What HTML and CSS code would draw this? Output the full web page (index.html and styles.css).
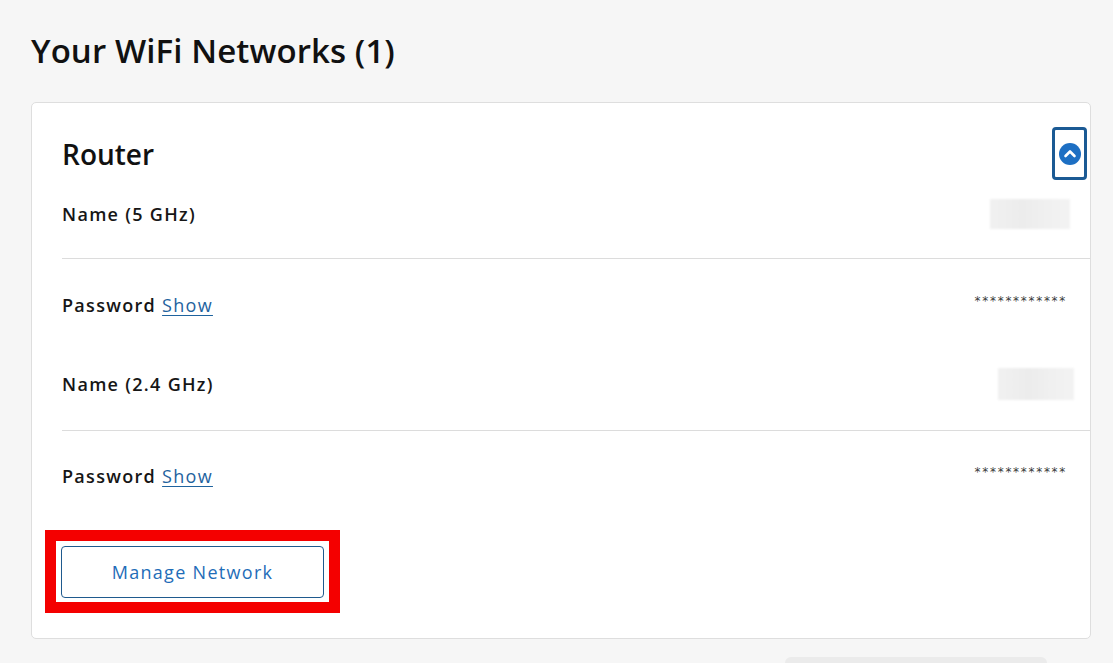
FILE: index.html
```html
<!DOCTYPE html>
<html lang="en">
<head>
<meta charset="utf-8">
<title>Your WiFi Networks</title>
<link rel="stylesheet" href="styles.css">
</head>
<body>
<div class="page">
  <h1 class="title">Your WiFi Networks (1)</h1>
  <section class="card">
    <div class="card-head">
      <h2 class="card-title">Router</h2>
      <button class="toggle" aria-label="Collapse">
        <svg width="22" height="22" viewBox="0 0 22 22">
          <circle cx="11" cy="11" r="11" fill="#1d6fc3"/>
          <path d="M6.5 13 L11 8.5 L15.5 13" fill="none" stroke="#fff" stroke-width="2.6" stroke-linecap="round" stroke-linejoin="round"/>
        </svg>
      </button>
    </div>
    <div class="row row-name1 divided">
      <span class="label">Name (5 GHz)</span>
      <span class="blur blur1"></span>
    </div>
    <div class="row row-pass1">
      <span class="label">Password <a class="link" href="#">Show</a></span>
      <span class="stars">************</span>
    </div>
    <div class="row row-name2 divided">
      <span class="label">Name (2.4 GHz)</span>
      <span class="blur blur2"></span>
    </div>
    <div class="row row-pass2">
      <span class="label">Password <a class="link" href="#">Show</a></span>
      <span class="stars">************</span>
    </div>
    <div class="actions">
      <div class="highlight">
        <button class="btn">Manage Network</button>
      </div>
    </div>
  </section>
  <div class="next-card"></div>
</div>
</body>
</html>
```
FILE: styles.css
```css
html, body {
  margin: 0;
  padding: 0;
  background: #f6f6f6;
  overflow: hidden;
}
body {
  font-family: "Open Sans", "Liberation Sans", sans-serif;
  color: #111;
}
.page {
  padding: 31px 22px 0 31px;
}
.title {
  margin: 0;
  font-size: 33px;
  line-height: 40px;
  font-weight: 600;
  color: #111;
  letter-spacing: 0.1px;
}
.card {
  margin-top: 31px;
  background: #fff;
  border: 1px solid #dedede;
  border-radius: 5px;
  padding: 0 0 40px 30px;
  box-sizing: border-box;
  width: 1060px;
}
.card-head {
  display: flex;
  align-items: center;
  justify-content: space-between;
  padding-top: 24px;
  padding-right: 3px;
}
.card-title {
  margin: 0;
  font-size: 28px;
  font-weight: 600;
  line-height: 34px;
}
.toggle {
  width: 35px;
  height: 53px;
  box-sizing: border-box;
  border: 3px solid #1b5a94;
  border-radius: 4px;
  background: #fff;
  padding: 0;
  display: flex;
  align-items: center;
  justify-content: center;
}
.toggle svg { display: block; }
.row {
  display: flex;
  align-items: center;
  justify-content: space-between;
}
.divided {
  border-bottom: 1px solid #dcdcdc;
}
.label {
  font-size: 18px;
  line-height: 22px;
  font-weight: 600;
  color: #161616;
  letter-spacing: 1.3px;
}
.link {
  color: #1f639e;
  text-decoration: underline;
  text-underline-offset: 3px;
  font-weight: 500;
}
.row-name1 {
  padding: 19px 20px 29px 0;
}
.row-pass1 {
  padding: 35px 23px 26px 0;
}
.row-name2 {
  padding: 26px 16px 30px 0;
}
.row-pass2 {
  padding: 34px 23px 0 0;
}
.blur {
  display: block;
  background: linear-gradient(90deg, #f1f1f1, #ececec 40%, #f0f0f0 70%, #f3f3f3);
  filter: blur(1px);
}
.blur1 { width: 80px; height: 30px; }
.blur2 { width: 76px; height: 32px; }
.stars {
  font-family: "DejaVu Sans", sans-serif;
  font-size: 12px;
  line-height: 22px;
  color: #3a3a3a;
  letter-spacing: 1.7px;
  position: relative;
  top: -4px;
}
.actions {
  padding-top: 59px;
  display: flex;
}
.highlight {
  position: relative;
  margin-left: -1px;
}
.highlight::before {
  content: "";
  position: absolute;
  left: -16px;
  top: -16px;
  right: -16px;
  bottom: -15px;
  border: 11px solid #f40000;
  pointer-events: none;
}
.btn {
  display: block;
  width: 263px;
  height: 52px;
  box-sizing: border-box;
  border: 1px solid #1f5a8e;
  border-radius: 4px;
  background: #fff;
  color: #1f6db8;
  font-family: "Open Sans", "Liberation Sans", sans-serif;
  font-size: 18px;
  font-weight: 500;
  letter-spacing: 1.3px;
}
.next-card {
  margin-top: 18px;
  margin-left: 754px;
  width: 262px;
  height: 20px;
  background: #ebebeb;
  border-radius: 6px 6px 0 0;
}
```
